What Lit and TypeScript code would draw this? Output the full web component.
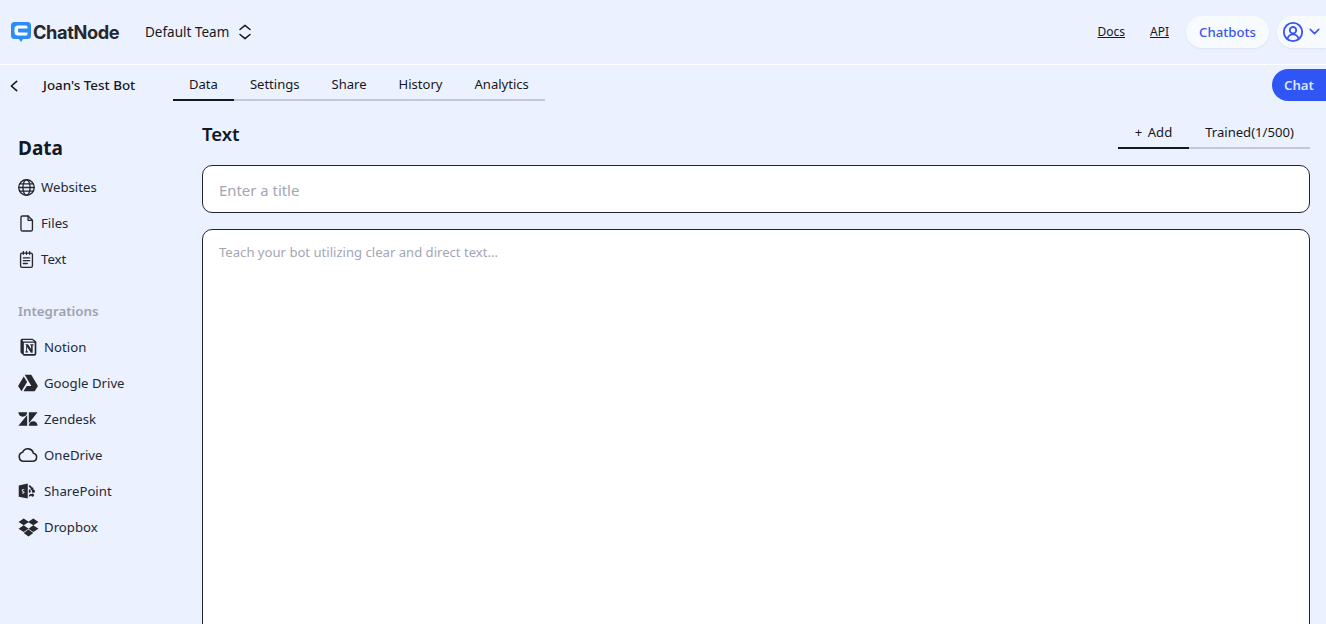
import { LitElement, html, css, svg } from "lit";
import { customElement } from "lit/decorators.js";

const stroke = (body: unknown, size = 18, sw = 1.6) => html`<svg class="ic" width=${size} height=${size} viewBox="0 0 24 24" fill="none" stroke="currentColor" stroke-width=${sw} stroke-linecap="round" stroke-linejoin="round">${body}</svg>`;
const solid = (body: unknown, w = 20, h = 20, vb = "0 0 24 24") => html`<svg class="ic" width=${w} height=${h} viewBox=${vb} fill="currentColor">${body}</svg>`;

const icons = {
  globe: stroke(svg`<circle cx="12" cy="12" r="9.800"/><path d="M2.500 12h19M3.500 7.500h17M3.500 16.500h17"/><ellipse cx="12" cy="12" rx="4.500" ry="9.800"/>`, 19, 1.700),
  file: stroke(svg`<path d="M14 2.500v5.500h5.500"/><path d="M7 2.500h7l5.500 5.500v11.500a2 2 0 0 1-2 2H7a2 2 0 0 1-2-2v-15a2 2 0 0 1 2-2z"/>`, 19, 1.700),
  text: stroke(svg`<rect x="4.500" y="4" width="15" height="18" rx="2"/><path d="M8 2v3.500M12 2v3.500M16 2v3.500M8 10h8M8 13.500h8M8 17h5"/>`, 19, 1.700),
  notion: solid(svg`<path fill-rule="evenodd" d="M5 2h12.500L22 5.500V20a2.500 2.500 0 0 1-2.500 2.500H7L3 18.500V4a2 2 0 0 1 2-2zM7 7v13.500h13V7zM5.500 4v.5l1 1h13l-2.500-2H6a.5.5 0 0 0-.5.500z"/><path d="M9 8.700h3l3.700 5.700V10.200l-1-.3v-1.200h3.900v1.200l-1 .3v8.700h-2.100l-4.600-7v5.200l1.200.3v1.200H8.800v-1.200l1-.3v-7.500l-.8-.3z"/>`, 20, 20),
  drive: solid(svg`<path d="M8.100 2h7.800l8 13.600h-7.900zM6.900 4.100l4 6.700L4.200 22 .1 15.600zM6.600 22l3.900-6.400h13.400L20 22z"/>`, 20, 20),
  zendesk: solid(svg`<path d="M11 7.200V20H.5zM11 4c0 3-2.400 5.300-5.300 5.300S.5 7 .5 4zM13 20c0-3 2.400-5.300 5.300-5.300S23.500 17 23.500 20zM13 17V4h10.500z"/>`, 20, 20),
  cloud: stroke(svg`<path d="M6.500 19.500h11a4.800 4.800 0 0 0 1-9.500 6.800 6.800 0 0 0-12.900-1.300A5.500 5.500 0 0 0 6.500 19.500z"/>`, 20, 1.900),
  sharepoint: solid(svg`<path fill-rule="evenodd" d="M1 4.500L13 2v20L1 19.500zM5.200 15c1.700.7 3.500.2 3.500-1.300 0-1.900-2.500-1.600-2.500-2.500 0-.7 1.200-.7 2.200-.2V9.800c-1.700-.6-3.500-.1-3.500 1.500 0 1.800 2.500 1.600 2.500 2.500 0 .8-1.400.7-2.200.1z"/><path d="M14.500 4.500a4 4 0 0 1 4 2.500 2 2 0 1 1-1.700 1.300 3 3 0 0 0-2.300-1.800zM20.500 10a2.200 2.200 0 1 1 0 4.400 2.200 2.200 0 0 1 0-4.400zM14.500 9.500a2.500 2.500 0 0 1 0 5zM18 16a2 2 0 1 1-.5 2 5 5 0 0 1-3 1.500V17.200a3 3 0 0 0 2-1.400z"/>`, 18, 18),
  dropbox: solid(svg`<path d="M6.700 1.500L12.500 5.300 6.700 9 1 5.300zM17.300 1.500L23 5.300 17.300 9 11.500 5.300zM1 12.800L6.700 9l5.300 3.800-5.300 3.700zM23 12.800l-5.700 3.700-5.300-3.700L17.300 9zM6.700 17.500l5.300-3.700 5.300 3.700-5.300 4z"/>`, 21, 19, "0.500 1 23 21"),
};

const item = (icon: unknown, label: string) => html`<a class="item"><span class="iconbox">${icon}</span><span>${label}</span></a>`;

@customElement("app-root")
export class AppRoot extends LitElement {
  static styles = css`
    :host { display: block; height: 624px; overflow: hidden; background: #ebf1fe; color: #111827; font-family: "Noto Sans", "Open Sans", sans-serif; font-size: 13.200px; }
    * { box-sizing: border-box; }
    .top { height: 65px; border-bottom: 1px solid #fff; display: flex; align-items: center; padding: 0 0 1px 11px; }
    .logo { display: flex; align-items: center; font: 700 18.200px "Inter", sans-serif; letter-spacing: -0.4px; color: #27272f; width: 134px; }
    .logo svg { margin-right: 2px; margin-top: 1px; }
    .team { display: flex; align-items: center; gap: 6px; font-size: 13.500px; color: #18181b; }
    .grow { flex: 1; }
    .links { display: flex; align-items: center; }
    .links a { text-decoration: underline; font-size: 12px; color: #18181b; }
    .docs { margin-right: 25px; }
    .api { margin-right: 17px; }
    .pill { height: 32px; border-radius: 16px; background: #f7faff; box-shadow: 0 1px 2px rgba(60, 80, 140, .08); color: #3b55f0; font-weight: 500; display: flex; align-items: center; justify-content: center; }
    .chatbots { width: 83px; }
    .user { width: 49px; margin-left: 8px; justify-content: flex-start; gap: 2px; padding-left: 5px; border-radius: 16px 0 0 16px; }
    .sub { height: 37px; display: flex; align-items: flex-start; position: relative; }
    .back { width: 43px; padding: 13px 0 0 6px; color: #18181b; height: 37px; }
    .bot { width: 130px; padding-top: 11px; font-size: 13.400px; font-weight: 500; color: #18181b; }
    .tabs { display: flex; border-bottom: 2px solid #c4c8d6; height: 36px; }
    .tab { padding: 10px 16px 0; height: 36px; margin-bottom: -2px; color: #18181b; font-size: 13.050px; border-bottom: 2px solid transparent; }
    .tab.on { border-bottom-color: #18181b; }
    .chat { position: absolute; right: 0; top: 4px; width: 54px; height: 32px; background: #2f55f5; color: #dbe5ff; border-radius: 16px 0 0 16px; font-weight: 600; display: flex; align-items: center; justify-content: center; }
    .body { display: flex; }
    .side { width: 202px; padding: 32px 0 0 18px; flex: none; }
    .side h2 { margin: 0 0 7px; font-size: 19px; line-height: 28px; font-weight: 700; color: #111827; }
    .item { display: flex; align-items: center; height: 36px; color: #1f2937; font-size: 13.200px; }
    .iconbox { width: 23px; display: flex; color: #27272f; }
    .side > .item .ic { margin-left: -1px; }
    .ints .iconbox { width: 26px; }
    .ints h3 { margin: 24px 0 8px; font-size: 13.300px; line-height: 20px; font-weight: 600; color: #9ca3af; }
    main { flex: 1; padding-right: 16px; min-width: 0; }
    .head { display: flex; justify-content: space-between; align-items: flex-start; height: 63px; }
    .head h1 { margin: 20px 0 0; font-size: 18.500px; line-height: 24px; font-weight: 600; color: #111827; }
    .subtabs { display: flex; border-bottom: 2px solid #c4c8d6; height: 32px; margin-top: 15px; width: 192px; }
    .st { height: 32px; padding-top: 6px; text-align: center; font-size: 13.100px; color: #18181b; border-bottom: 2px solid transparent; margin-bottom: -2px; }
    .st.on { width: 71px; word-spacing: 2px; border-bottom-color: #18181b; }
    .st.off { flex: 1; }
    .field { background: #fff; border: 1px solid #1f2433; border-radius: 10px; }
    .title { height: 48px; display: flex; align-items: center; padding: 1px 0 0 16px; font-size: 14.900px; color: #a3a6b4; }
    .area { height: 500px; margin-top: 16px; padding: 12px 16px; font-size: 13.100px; line-height: 20px; color: #a3a6b4; }
  `;

  render() {
    return html`
      <header class="top">
        <div class="logo">
          <svg width="20" height="21" viewBox="0 0 20 21"><path fill="#2c8cf8" d="M3.500 0h13A3.500 3.500 0 0 1 20 3.500v10a3.500 3.500 0 0 1-3.500 3.500H12l-2 3-2-3H3.500A3.500 3.500 0 0 1 0 13.500v-10A3.500 3.500 0 0 1 3.500 0z"/><path fill="#fff" d="M7 3.500h8a1.500 1.500 0 0 1 1.500 1.500v1.500L14 6.500H8a1 1 0 0 0-1 1v2a1 1 0 0 0 1 1h6l2.500 0V12a1.500 1.500 0 0 1-1.500 1.500H7A3.500 3.500 0 0 1 3.500 10V7A3.500 3.500 0 0 1 7 3.500z"/></svg>
          <span>ChatNode</span>
        </div>
        <div class="team">
          <span>Default Team</span>
          ${stroke(svg`<path d="M6 9l6-5 6 5M6 15l6 5 6-5"/>`, 20, 1.800)}
        </div>
        <div class="grow"></div>
        <div class="links">
          <a class="docs">Docs</a>
          <a class="api">API</a>
          <div class="pill chatbots">Chatbots</div>
          <div class="pill user">
            ${stroke(svg`<circle cx="12" cy="12" r="10"/><circle cx="12" cy="10" r="3.500"/><path d="M6 19c1-3 3.500-4.500 6-4.500s5 1.500 6 4.500"/>`, 22, 2)}
            ${stroke(svg`<path d="M6 9l6 6 6-6"/>`, 17, 2.200)}
          </div>
        </div>
      </header>
      <div class="sub">
        <div class="back">${stroke(svg`<path d="M16 5l-8 7 8 7"/>`, 16, 2.400)}</div>
        <div class="bot">Joan's Test Bot</div>
        <nav class="tabs">
          <div class="tab on">Data</div>
          <div class="tab">Settings</div>
          <div class="tab">Share</div>
          <div class="tab">History</div>
          <div class="tab">Analytics</div>
        </nav>
        <div class="chat">Chat</div>
      </div>
      <div class="body">
        <aside class="side">
          <h2>Data</h2>
          ${item(icons.globe, "Websites")}
          ${item(icons.file, "Files")}
          ${item(icons.text, "Text")}
          <div class="ints">
            <h3>Integrations</h3>
            ${item(icons.notion, "Notion")}
            ${item(icons.drive, "Google Drive")}
            ${item(icons.zendesk, "Zendesk")}
            ${item(icons.cloud, "OneDrive")}
            ${item(icons.sharepoint, "SharePoint")}
            ${item(icons.dropbox, "Dropbox")}
          </div>
        </aside>
        <main>
          <div class="head">
            <h1>Text</h1>
            <div class="subtabs">
              <div class="st on">+ Add</div>
              <div class="st off">Trained(1/500)</div>
            </div>
          </div>
          <div class="field title">Enter a title</div>
          <div class="field area">Teach your bot utilizing clear and direct text...</div>
        </main>
      </div>
    `;
  }
}
